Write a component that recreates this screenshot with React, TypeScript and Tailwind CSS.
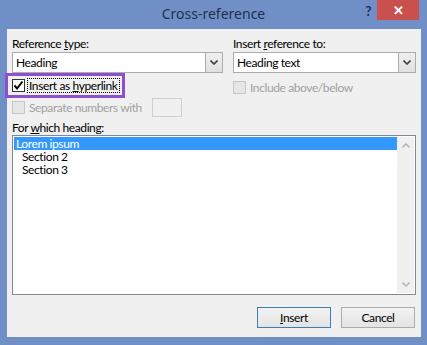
import React from 'react'

const font = { fontFamily: 'Lato, "Noto Sans", sans-serif' }
const titleFont = { fontFamily: '"Noto Sans", "Open Sans", sans-serif' }

function Chevron({ up, className }: { up?: boolean; className?: string }) {
  return (
    <svg className={className} viewBox="0 0 8 5" width="8" height="5" fill="none" stroke="currentColor" strokeWidth={1.6}>
      <polyline points={up ? '0.5 4.5 4 1 7.5 4.5' : '0.5 0.5 4 4 7.5 0.5'} />
    </svg>
  )
}

function Combo({ value, width }: { value: string; width: string }) {
  return (
    <div className={`flex h-[21px] ${width} border border-[#acacac] bg-white`}>
      <span className="flex-1 pl-[3px] leading-[19px] text-[#000]">{value}</span>
      <div className="flex w-[17px] items-center justify-center border-l border-[#acacac] bg-gradient-to-b from-[#f0f0f0] to-[#e0e0e0] text-[#404040]">
        <Chevron />
      </div>
    </div>
  )
}

function Box({ checked, disabled }: { checked?: boolean; disabled?: boolean }) {
  return (
    <span
      className={`flex h-[13px] w-[13px] shrink-0 items-center justify-center border ${
        disabled ? 'border-[#c7c7c7] bg-[#e6e6e6]' : 'border-[#333] bg-white'
      }`}
    >
      {checked && (
        <svg viewBox="0 0 11 11" width="11" height="11" fill="none" stroke="#000" strokeWidth={2}>
          <polyline points="1.5 5.5 4 8.5 9.5 1.5" />
        </svg>
      )}
    </span>
  )
}

function Button({ label, ul, primary }: { label: string; ul?: number; primary?: boolean }) {
  return (
    <button
      className={`h-[21px] w-[74px] border bg-gradient-to-b from-[#f2f2f2] to-[#e4e4e4] leading-[19px] text-black ${
        primary ? 'border-[#3c7fb1]' : 'border-[#acacac]'
      }`}
    >
      {ul !== undefined ? (
        <>
          {label.slice(0, ul)}
          <u>{label[ul]}</u>
          {label.slice(ul + 1)}
        </>
      ) : (
        label
      )}
    </button>
  )
}

export default function App() {
  return (
    <div className="flex h-[345px] w-[427px] flex-col bg-[#6f8fc6] text-[12px] tracking-[-0.4px]" style={font}>
      {/* Title bar */}
      <div className="grid h-[29px] grid-cols-[1fr_auto_1fr]">
        <div />
        <span className="pt-[4px] text-[14px] leading-[20px] tracking-normal text-[#1f2f4f]" style={titleFont}>
          Cross-reference
        </span>
        <div className="flex items-start justify-end pr-[8px]">
          <span className="mt-[3px] mr-[6px] text-[13px] font-bold leading-[16px] text-[#1f2f4f]">?</span>
          <span className="flex h-[20px] w-[42px] items-center justify-center bg-[#c9504d] text-[13px] font-bold leading-none text-white">
            ✕
          </span>
        </div>
      </div>

      {/* Client area */}
      <div className="mx-[7px] flex h-[308px] w-[414px] flex-col bg-[#f0f0f0] pl-[5px] pt-[7px] leading-[15px]">
        <div className="grid grid-cols-[211px_183px] gap-x-[10px]">
          <div className="flex flex-col">
            <span className="text-black">
              Reference <u>t</u>ype:
            </span>
            <div className="mt-[1px]">
              <Combo value="Heading" width="w-[211px]" />
            </div>
            <div className="ml-[-7px] flex h-[25px] w-[120px] items-center border-[3px] border-[#8e4fcf] pl-[4px]">
              <Box checked />
              <span className="ml-[2px] whitespace-nowrap border border-dotted border-black px-[1px] leading-[13px] text-black">
                Insert as <u>h</u>yperlink
              </span>
            </div>
            <div className="flex h-[19px] items-center">
              <Box disabled />
              <span className="ml-[4px] w-[110px] whitespace-nowrap text-[#a0a0a0]">Separate numbers with</span>
              <span className="ml-[13px] h-[19px] w-[30px] border border-[#cfcfcf] bg-[#f0f0f0]" />
            </div>
          </div>
          <div className="flex flex-col">
            <span className="text-black">
              Insert <u>r</u>eference to:
            </span>
            <div className="mt-[1px]">
              <Combo value="Heading text" width="w-[183px]" />
            </div>
            <div className="mt-[7px] flex items-center">
              <Box disabled />
              <span className="ml-[4px] text-[#a0a0a0]">Include above/below</span>
            </div>
          </div>
        </div>

        <span className="mt-[3px] text-black">
          For <u>w</u>hich heading:
        </span>
        <div className="flex h-[160px] w-[404px] border border-[#828790] bg-white p-[1px]">
          <div className="flex flex-1 flex-col">
            <span className="h-[13px] bg-[#3399ff] pl-[2px] leading-[13px] text-white">Lorem ipsum</span>
            <span className="h-[13px] pl-[8px] leading-[13px] text-black">Section 2</span>
            <span className="h-[13px] pl-[8px] leading-[13px] text-black">Section 3</span>
          </div>
          <div className="flex w-[17px] flex-col items-center justify-between bg-[#f0f0f0] py-[6px] text-[#b8b8b8]">
            <Chevron up />
            <Chevron />
          </div>
        </div>

        <div className="mt-[12px] flex justify-end gap-[10px] pr-[6px]">
          <Button label="Insert" ul={0} primary />
          <Button label="Cancel" />
        </div>
      </div>
    </div>
  )
}
